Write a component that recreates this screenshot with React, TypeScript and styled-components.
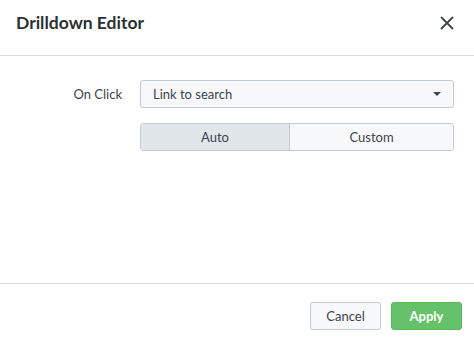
import React from "react";
import styled, { createGlobalStyle } from "styled-components";

const Global = createGlobalStyle`
  html, body { margin: 0; padding: 0; background: #fff; }
  body { font-family: Lato, "Open Sans", sans-serif; color: #3c444d; }
`;

const Dialog = styled.div`
  width: 474px;
  height: 338px;
  display: flex;
  flex-direction: column;
  background: #fff;
`;

const Header = styled.div`
  height: 56px;
  display: flex;
  align-items: center;
  justify-content: space-between;
  padding: 0 20px 10px 16px;
  box-sizing: border-box;
  border-bottom: 1px solid #d9dadc;
`;

const Title = styled.h1`
  margin: 0;
  font-size: 17.5px;
  font-weight: 700;
  color: #2b3033;
`;

const Close = styled.button`
  border: 0;
  background: none;
  padding: 0;
  width: 14px;
  height: 14px;
  display: flex;
  cursor: pointer;
`;

const Body = styled.div`
  flex: 1;
  padding: 24px 20px 0 0;
  display: flex;
  flex-direction: column;
  gap: 15px;
`;

const Row = styled.div`
  display: grid;
  grid-template-columns: 140px 1fr;
  align-items: center;
`;

const Label = styled.label`
  font-size: 13px;
  text-align: right;
  padding-right: 18px;
  color: #3c444d;
`;

const Select = styled.div`
  height: 28px;
  box-sizing: border-box;
  border: 1px solid #c3cbd4;
  border-radius: 3px;
  background: #f7f8fa;
  display: flex;
  align-items: center;
  justify-content: space-between;
  padding: 0 12px 0 12px;
  font-size: 13px;
  color: #3c444d;
`;

const Caret = styled.span`
  width: 0;
  height: 0;
  border-left: 4px solid transparent;
  border-right: 4px solid transparent;
  border-top: 4px solid #3c444d;
`;

const Segmented = styled.div`
  grid-column: 2;
  height: 28px;
  box-sizing: border-box;
  border: 1px solid #c3cbd4;
  border-radius: 3px;
  display: grid;
  grid-template-columns: 148px 1fr;
  overflow: hidden;
`;

const Seg = styled.div<{ $active?: boolean }>`
  display: flex;
  align-items: center;
  justify-content: center;
  font-size: 13px;
  color: #3c444d;
  background: ${(p) => (p.$active ? "#e1e6eb" : "#f7f8fa")};
  & + & { border-left: 1px solid #c3cbd4; }
`;

const Footer = styled.div`
  height: 55px;
  border-top: 1px solid #d9dadc;
  display: flex;
  justify-content: flex-end;
  align-items: flex-start;
  gap: 10px;
  padding: 18px 12px 0 0;
  box-sizing: border-box;
`;

const Button = styled.button<{ $primary?: boolean }>`
  height: 28px;
  width: 71px;
  box-sizing: border-box;
  border-radius: 3px;
  font-family: Lato, "Open Sans", sans-serif;
  font-size: 13px;
  font-weight: ${(p) => (p.$primary ? 700 : 400)};
  border: 1px solid ${(p) => (p.$primary ? "#5cb85c" : "#c3cbd4")};
  background: ${(p) => (p.$primary ? "#65c26a" : "#f7f8fa")};
  color: ${(p) => (p.$primary ? "#fff" : "#3c444d")};
  cursor: pointer;
`;

export default function App() {
  return (
    <>
      <Global />
      <Dialog>
        <Header>
          <Title>Drilldown Editor</Title>
          <Close aria-label="Close">
            <svg width="14" height="14" viewBox="0 0 14 14">
              <path d="M1.5 1.5 L12.5 12.5 M12.5 1.5 L1.5 12.5" stroke="#3c444d" strokeWidth="1.8" strokeLinecap="round" />
            </svg>
          </Close>
        </Header>
        <Body>
          <Row>
            <Label>On Click</Label>
            <Select>
              <span>Link to search</span>
              <Caret />
            </Select>
          </Row>
          <Row>
            <Segmented>
              <Seg $active>Auto</Seg>
              <Seg>Custom</Seg>
            </Segmented>
          </Row>
        </Body>
        <Footer>
          <Button>Cancel</Button>
          <Button $primary>Apply</Button>
        </Footer>
      </Dialog>
    </>
  );
}
